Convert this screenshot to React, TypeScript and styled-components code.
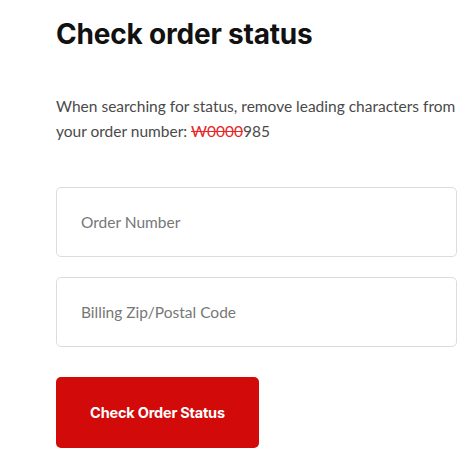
import styled, { createGlobalStyle } from "styled-components";

const GlobalStyle = createGlobalStyle`
  body {
    margin: 0;
    background: #ffffff;
    font-family: Lato, "Noto Sans", sans-serif;
  }
`;

function App() {
  return (
    <>
      <GlobalStyle />
      <Page>
        <Title>Check order status</Title>
        <Hint>
          When searching for status, remove leading characters from your order
          number: <Struck>W0000</Struck>985
        </Hint>
        <Form onSubmit={(e) => e.preventDefault()}>
          <Field placeholder="Order Number" />
          <Field placeholder="Billing Zip/Postal Code" />
          <Submit type="submit">Check Order Status</Submit>
        </Form>
      </Page>
    </>
  );
}

const Page = styled.div`
  padding: 16px 15px 0 56px;
  width: 401px;
`;

const Title = styled.h1`
  margin: 0;
  font-family: Inter, "Noto Sans", sans-serif;
  font-size: 28px;
  font-weight: 700;
  line-height: 36px;
  color: #111;
  letter-spacing: -0.2px;
`;

const Hint = styled.p`
  margin: 42px 0 0;
  font-size: 15.5px;
  line-height: 25px;
  color: #4a4a4a;
`;

const Struck = styled.span`
  color: #e8262a;
  text-decoration: line-through;
`;

const Form = styled.form`
  display: flex;
  flex-direction: column;
  align-items: flex-start;
  gap: 20px;
  margin-top: 43px;
`;

const Field = styled.input`
  box-sizing: border-box;
  width: 401px;
  height: 70px;
  padding: 0 24px;
  border: 1px solid #dcdcdc;
  border-radius: 5px;
  font-family: inherit;
  font-size: 15.5px;
  color: #222;
  outline: none;

  &::placeholder {
    color: #777;
  }
`;

const Submit = styled.button`
  width: 203px;
  height: 71px;
  margin-top: 10px;
  border: none;
  border-radius: 5px;
  background: #d20a0a;
  color: #fff;
  font-family: Inter, "Noto Sans", sans-serif;
  font-size: 14.5px;
  font-weight: 700;
  letter-spacing: -0.2px;
  cursor: pointer;
`;

export default App;
